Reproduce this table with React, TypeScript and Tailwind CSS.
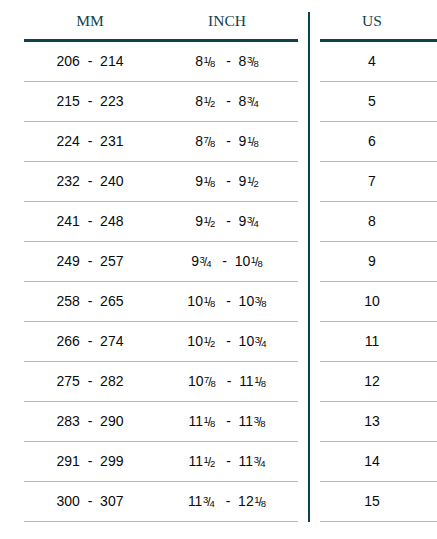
import React from "react";

type F = [string, string, string];
const rows: { mm: string; a: F; b: F; us: string }[] = [
  { mm: "206  -  214", a: ["8", "1", "8"], b: ["8", "3", "8"], us: "4" },
  { mm: "215  -  223", a: ["8", "1", "2"], b: ["8", "3", "4"], us: "5" },
  { mm: "224  -  231", a: ["8", "7", "8"], b: ["9", "1", "8"], us: "6" },
  { mm: "232  -  240", a: ["9", "1", "8"], b: ["9", "1", "2"], us: "7" },
  { mm: "241  -  248", a: ["9", "1", "2"], b: ["9", "3", "4"], us: "8" },
  { mm: "249  -  257", a: ["9", "3", "4"], b: ["10", "1", "8"], us: "9" },
  { mm: "258  -  265", a: ["10", "1", "8"], b: ["10", "3", "8"], us: "10" },
  { mm: "266  -  274", a: ["10", "1", "2"], b: ["10", "3", "4"], us: "11" },
  { mm: "275  -  282", a: ["10", "7", "8"], b: ["11", "1", "8"], us: "12" },
  { mm: "283  -  290", a: ["11", "1", "8"], b: ["11", "3", "8"], us: "13" },
  { mm: "291  -  299", a: ["11", "1", "2"], b: ["11", "3", "4"], us: "14" },
  { mm: "300  -  307", a: ["11", "3", "4"], b: ["12", "1", "8"], us: "15" },
];

const serif = { fontFamily: '"Liberation Serif", serif' };
const sans = { fontFamily: '"Liberation Sans", Arial, sans-serif' };

function Mixed({ f, trail }: { f: F; trail?: boolean }) {
  return (
    <span className={trail ? "mr-[3px]" : ""}>
      {f[0]}
      <span className="text-[9.5px] align-[3.5px] ml-[0.5px]">{f[1]}</span>
      <span className="text-[12px] mx-[-1px]">/</span>
      <span className="text-[9.5px] align-[-1px]">{f[2]}</span>
    </span>
  );
}

export default function App() {
  return (
    <div className="w-[437px] h-[539px] bg-white overflow-hidden flex" style={sans}>
      <div className="ml-[24px] w-[274px] flex flex-col">
        <div
          className="h-[42px] box-border border-b-[3px] border-[#0e434b] grid grid-cols-[132px_142px] items-center pt-[2px] text-[15.5px] text-[#0e434b]"
          style={serif}
        >
          <div className="text-center">MM</div>
          <div className="text-center">INCH</div>
        </div>
        {rows.map((r, i) => (
          <div
            key={i}
            className="h-[40px] box-border border-b border-[#b5b5b5] grid grid-cols-[132px_142px] items-center text-[14px] text-[#0a0a0a]"
          >
            <div className="text-center whitespace-pre">{r.mm}</div>
            <div className="text-center whitespace-pre">
              <Mixed f={r.a} trail />
              {"  -  "}
              <Mixed f={r.b} />
            </div>
          </div>
        ))}
      </div>
      <div className="ml-[10px] mt-[12px] w-[2px] h-[510px] bg-[#0e434b]" />
      <div className="ml-[10px] w-[117px] flex flex-col">
        <div
          className="h-[42px] box-border border-b-[3px] border-[#0e434b] flex items-center pt-[2px] text-[15.5px] text-[#0e434b]"
          style={serif}
        >
          <div className="w-[104px] text-center">US</div>
        </div>
        {rows.map((r, i) => (
          <div
            key={i}
            className="h-[40px] box-border border-b border-[#b5b5b5] flex items-center text-[14px] text-[#0a0a0a]"
          >
            <div className="w-[104px] text-center">{r.us}</div>
          </div>
        ))}
      </div>
    </div>
  );
}
